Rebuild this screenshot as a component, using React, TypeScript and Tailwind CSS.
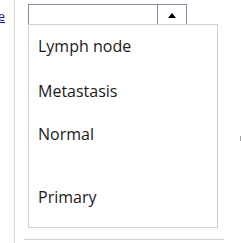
import React from "react";

const items: { label: string; h: string }[] = [
  { label: "Lymph node", h: "h-[45px]" },
  { label: "Metastasis", h: "h-[43px]" },
  { label: "Normal", h: "h-[63px]" },
  { label: "Primary", h: "h-[24px]" },
];

export default function App() {
  return (
    <div
      className="relative w-[241px] h-[243px] bg-white overflow-hidden flex"
      style={{ fontFamily: '"Open Sans", "Noto Sans", sans-serif' }}
    >
      <div className="w-[14px] shrink-0 pt-[8px]">
        <div className="w-[5px] overflow-hidden flex justify-end">
          <span className="text-[13px] leading-[16px] text-[#1a0dab] underline whitespace-nowrap">Type</span>
        </div>
      </div>
      <div className="flex-1 border-l border-[#d6d6d6] flex flex-col">
        <div className="pl-[13px] pt-[4px]">
          <div className="w-[159px] h-[22px] border border-[#8c889f] flex bg-white">
            <div className="flex-1" />
            <div className="w-[29px] border-l border-[#8c889f] flex items-center justify-center">
              <svg width="8" height="5" viewBox="0 0 8 5">
                <path d="M0 5 L4 0 L8 5 Z" fill="#000" />
              </svg>
            </div>
          </div>
        </div>
        <div className="mt-auto mb-[3px] ml-[9px] w-[200px] border-t border-[#d0d0d0]" />
      </div>

      <div className="absolute left-[240px] top-[136px] w-[1px] h-[5px] bg-[#a0a0a0]" />

      <div className="absolute left-[28px] top-[24px] w-[190px] h-[204px] bg-white border border-[#d0d0d0] pt-[9px] pl-[9px]">
        {items.map((it) => (
          <div key={it.label} className={`${it.h} text-[16px] leading-[24px] text-[#1a1a1a]`}>
            {it.label}
          </div>
        ))}
      </div>
    </div>
  );
}
